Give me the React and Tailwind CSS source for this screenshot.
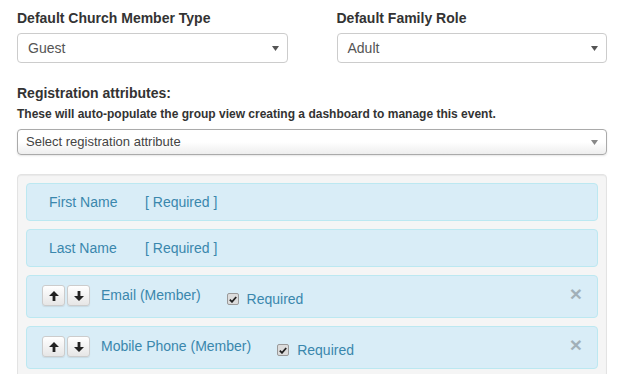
import React from "react";

const font = { fontFamily: '"Liberation Sans", Arial, sans-serif' };

function Caret({ color = "#555" }) {
  return (
    <svg width="7" height="5" viewBox="0 0 7 5" className="shrink-0">
      <path d="M0 0 L7 0 L3.5 5 Z" fill={color} />
    </svg>
  );
}

function NativeSelect({ value }) {
  return (
    <div className="flex h-[30px] items-center justify-between rounded-[4px] border border-[#ccc] bg-white pl-[10px] pr-[8px] text-[14px] text-[#555]">
      <span>{value}</span>
      <Caret />
    </div>
  );
}

function Arrow({ up }) {
  return (
    <svg width="10" height="10" viewBox="0 0 10 10">
      {up ? (
        <path d="M5 0 L10 5 L6.4 5 L6.4 10 L3.6 10 L3.6 5 L0 5 Z" fill="#222" />
      ) : (
        <path d="M5 10 L10 5 L6.4 5 L6.4 0 L3.6 0 L3.6 5 L0 5 Z" fill="#222" />
      )}
    </svg>
  );
}

function ArrowBtn({ up }) {
  return (
    <div className="flex h-[21px] w-[23px] items-center justify-center rounded-[3px] border border-[#ccc] bg-gradient-to-b from-white to-[#e6e6e6] shadow-[0_1px_1px_rgba(0,0,0,0.08)]">
      <Arrow up={up} />
    </div>
  );
}

function Check() {
  return (
    <span className="flex h-[12px] w-[12px] items-center justify-center rounded-[2px] border border-[#9a9a9a] bg-[#dcdcdc]">
      <svg width="8" height="7" viewBox="0 0 8 7">
        <path d="M0.8 3.6 L3 5.8 L7.2 1" stroke="#222" strokeWidth="1.8" fill="none" />
      </svg>
    </span>
  );
}

function FixedItem({ label }) {
  return (
    <div className="flex h-[38px] items-center rounded-[4px] border border-[#bce8f1] bg-[#d9edf7] pl-[22px] pt-[1px] text-[14px] text-[#3a87ad]">
      <span className="w-[96px]">{label}</span>
      <span>[ Required ]</span>
    </div>
  );
}

function MovableItem({ label }) {
  return (
    <div className="flex h-[43px] items-start rounded-[4px] border border-[#bce8f1] bg-[#d9edf7] pl-[15px] pr-[15px] pt-[9px] text-[14px] leading-[20px] text-[#3a87ad]">
      <div className="flex gap-[2px]">
        <ArrowBtn up />
        <ArrowBtn />
      </div>
      <span className="ml-[11px]">{label}</span>
      <div className="ml-[26px] mt-[4px] flex items-center gap-[8px]">
        <Check />
        <span>Required</span>
      </div>
      <span className="ml-auto mt-[-2px] text-[21px] font-bold leading-[21px] text-black opacity-25">×</span>
    </div>
  );
}

export default function App() {
  return (
    <div className="h-[374px] w-[634px] overflow-hidden bg-white text-[#333]" style={font}>
      <div className="pl-[17px] pr-[27px] pt-[8px]">
        <div className="grid grid-cols-2 gap-x-[49px]">
          <div>
            <div className="mb-[5px] text-[14px] font-bold leading-[20px]">Default Church Member Type</div>
            <NativeSelect value="Guest" />
          </div>
          <div>
            <div className="mb-[5px] text-[14px] font-bold leading-[20px]">Default Family Role</div>
            <NativeSelect value="Adult" />
          </div>
        </div>
        <div className="mt-[20px] text-[14px] font-bold leading-[20px]">Registration attributes:</div>
        <div className="mt-[3px] text-[12px] font-bold leading-[17px]">
          These will auto-populate the group view creating a dashboard to manage this event.
        </div>
        <div className="mt-[6px] flex h-[26px] items-center justify-between rounded-[4px] border border-[#aaa] bg-gradient-to-b from-white from-50% to-[#eee] pl-[8px] pr-[8px] text-[13px] text-[#444] shadow-[0_1px_2px_rgba(0,0,0,0.1)]">
          <span>Select registration attribute</span>
          <Caret color="#888" />
        </div>
        <div className="mt-[19px] flex h-[220px] flex-col gap-[8px] rounded-[4px] border border-[#e3e3e3] bg-[#f5f5f5] p-[8px] shadow-[inset_0_1px_1px_rgba(0,0,0,0.05)]">
          <FixedItem label="First Name" />
          <FixedItem label="Last Name" />
          <MovableItem label="Email (Member)" />
          <MovableItem label="Mobile Phone (Member)" />
        </div>
      </div>
    </div>
  );
}
